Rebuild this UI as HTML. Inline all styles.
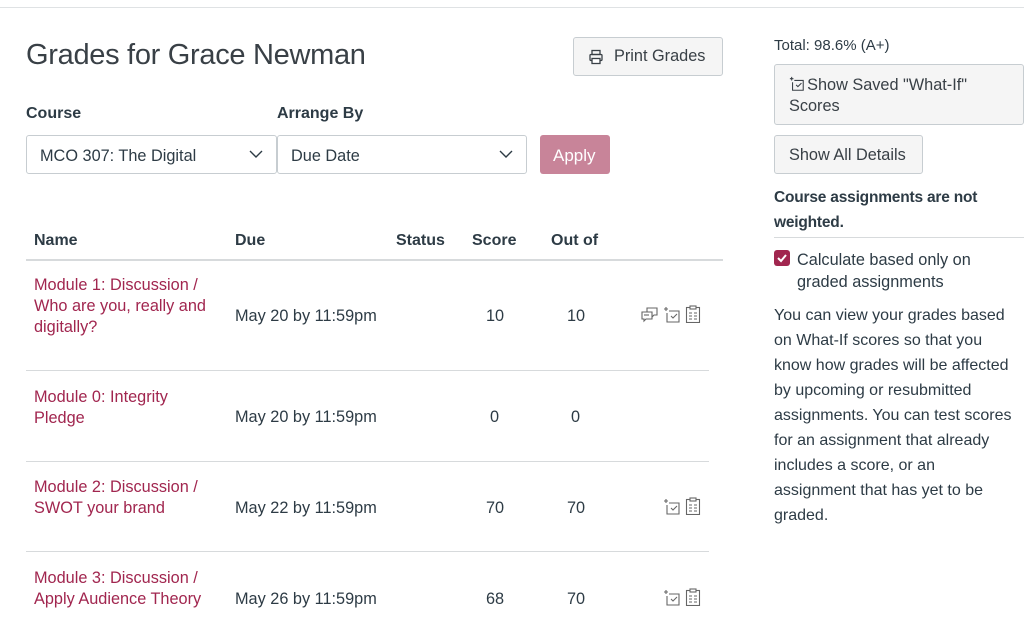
<!DOCTYPE html>
<html><head><meta charset="utf-8"><style>
body{margin:0;width:1024px;height:627px;background:#fff;font-family:"Liberation Sans",Arial,sans-serif;color:#2d3b45;position:relative;overflow:hidden}
.a{position:absolute;white-space:nowrap}
.l{color:#a1264f;font-size:16.3px;line-height:21px}
.t{font-size:16.3px}
.h{font-weight:bold;font-size:16px}
.hr{position:absolute;height:1px;background:#d7dadc}
.btn{position:absolute;background:#f5f5f5;border:1px solid #c7cdd1;border-radius:3px;box-sizing:border-box}
.sel{position:absolute;border:1px solid #c7cdd1;border-radius:3px;box-sizing:border-box;background:#fff}
svg{position:absolute}
</style></head><body>
<div class="hr" style="left:0;top:7px;width:1024px;background:#dfe2e4"></div>
<div class="a" style="left:26px;top:39px;font-size:29px;letter-spacing:-0.3px;color:#394046">Grades for Grace Newman</div>
<div class="btn" style="left:573px;top:37px;width:150px;height:39px"></div>
<svg style="left:588px;top:49px" width="16" height="16" viewBox="0 0 16 16" fill="none" stroke="#394046" stroke-width="1.3"><rect x="4" y="1.5" width="8" height="4"/><rect x="2" y="5.5" width="12" height="6" rx="1"/><rect x="4" y="9.5" width="8" height="5" fill="#fff"/></svg>
<div class="a t" style="left:614px;top:47px;color:#394046">Print Grades</div>
<div class="a h" style="left:26px;top:105px">Course</div>
<div class="a h" style="left:277px;top:105px">Arrange By</div>
<div class="sel" style="left:26px;top:135px;width:251px;height:39px"></div>
<div class="a t" style="left:40px;top:147px">MCO 307: The Digital</div>
<svg style="left:248px;top:148px" width="16" height="12" viewBox="0 0 16 12" fill="none" stroke="#2d3b45" stroke-width="1.4"><path d="M2 3l6 6 6-6"/></svg>
<div class="sel" style="left:277px;top:135px;width:250px;height:39px"></div>
<div class="a t" style="left:291px;top:147px">Due Date</div>
<svg style="left:498px;top:148px" width="16" height="12" viewBox="0 0 16 12" fill="none" stroke="#2d3b45" stroke-width="1.4"><path d="M2 3l6 6 6-6"/></svg>
<div class="a" style="left:540px;top:135px;width:70px;height:39px;background:#c88499;border-radius:3px"></div>
<div class="a t" style="left:553px;top:146px;color:#fff;font-size:17px">Apply</div>
<div class="a h" style="left:34px;top:232px">Name</div>
<div class="a h" style="left:235px;top:232px">Due</div>
<div class="a h" style="left:396px;top:232px">Status</div>
<div class="a h" style="left:472px;top:232px">Score</div>
<div class="a h" style="left:551px;top:232px">Out of</div>
<div class="hr" style="left:26px;top:259px;width:697px;height:2px"></div>

<div class="a l" style="left:34px;top:275px">Module 1: Discussion /<br>Who are you, really and<br>digitally?</div>
<div class="a t" style="left:235px;top:307px">May 20 by 11:59pm</div>
<div class="a t" style="left:486px;top:307px">10</div>
<div class="a t" style="left:567px;top:307px">10</div>
<div class="hr" style="left:26px;top:370px;width:683px"></div>

<div class="a l" style="left:34px;top:387px">Module 0: Integrity<br>Pledge</div>
<div class="a t" style="left:235px;top:408px">May 20 by 11:59pm</div>
<div class="a t" style="left:490px;top:408px">0</div>
<div class="a t" style="left:571px;top:408px">0</div>
<div class="hr" style="left:26px;top:461px;width:683px"></div>

<div class="a l" style="left:34px;top:477px">Module 2: Discussion /<br>SWOT your brand</div>
<div class="a t" style="left:235px;top:499px">May 22 by 11:59pm</div>
<div class="a t" style="left:486px;top:499px">70</div>
<div class="a t" style="left:567px;top:499px">70</div>
<div class="hr" style="left:26px;top:551px;width:683px"></div>

<div class="a l" style="left:34px;top:568px">Module 3: Discussion /<br>Apply Audience Theory</div>
<div class="a t" style="left:235px;top:590px">May 26 by 11:59pm</div>
<div class="a t" style="left:486px;top:590px">68</div>
<div class="a t" style="left:567px;top:590px">70</div>

<svg style="left:641px;top:306px" width="18" height="18" viewBox="0 0 18 18" fill="none" stroke="#666" stroke-width="1.1"><path d="M6 2h10v7h-3l-2 2v-2H6z"/><path d="M1 6h10v7H5l-2 2v-2H1z" fill="#fff"/><path d="M3 9h5"/></svg>
<svg style="left:663px;top:306px" width="18" height="18" viewBox="0 0 18 18" fill="none" stroke="#666" stroke-width="1.1"><path d="M1 3h4M3 1v4"/><path d="M6 5h10v11H4V7"/><path d="M8 10l2 2 4-4"/></svg>
<svg style="left:685px;top:305px" width="16" height="18" viewBox="0 0 16 18" fill="none" stroke="#666" stroke-width="1.1"><rect x="1.5" y="2.5" width="13" height="15"/><rect x="5" y="1" width="6" height="3" fill="#fff"/><path d="M4 8h3M9 8h3M4 11h3M9 11h3M4 14h3M9 14h3"/></svg>
<svg style="left:663px;top:498px" width="18" height="18" viewBox="0 0 18 18" fill="none" stroke="#666" stroke-width="1.1"><path d="M1 3h4M3 1v4"/><path d="M6 5h10v11H4V7"/><path d="M8 10l2 2 4-4"/></svg>
<svg style="left:685px;top:497px" width="16" height="18" viewBox="0 0 16 18" fill="none" stroke="#666" stroke-width="1.1"><rect x="1.5" y="2.5" width="13" height="15"/><rect x="5" y="1" width="6" height="3" fill="#fff"/><path d="M4 8h3M9 8h3M4 11h3M9 11h3M4 14h3M9 14h3"/></svg>
<svg style="left:663px;top:589px" width="18" height="18" viewBox="0 0 18 18" fill="none" stroke="#666" stroke-width="1.1"><path d="M1 3h4M3 1v4"/><path d="M6 5h10v11H4V7"/><path d="M8 10l2 2 4-4"/></svg>
<svg style="left:685px;top:588px" width="16" height="18" viewBox="0 0 16 18" fill="none" stroke="#666" stroke-width="1.1"><rect x="1.5" y="2.5" width="13" height="15"/><rect x="5" y="1" width="6" height="3" fill="#fff"/><path d="M4 8h3M9 8h3M4 11h3M9 11h3M4 14h3M9 14h3"/></svg>

<div class="a" style="left:774px;top:37px;font-size:15px">Total: 98.6% (A+)</div>
<div class="btn" style="left:774px;top:64px;width:250px;height:61px"></div>
<svg style="left:789px;top:76px" width="16" height="16" viewBox="0 0 18 18" fill="none" stroke="#394046" stroke-width="1.2"><path d="M1 3h4M3 1v4"/><path d="M6 5h10v11H4V7"/><path d="M8 10l2 2 4-4"/></svg>
<div class="a t" style="left:789px;top:75px;line-height:21px;color:#394046">&nbsp;&nbsp;&nbsp;&nbsp;Show Saved "What-If"<br>Scores</div>
<div class="btn" style="left:774px;top:135px;width:149px;height:39px"></div>
<div class="a t" style="left:789px;top:146px;color:#394046">Show All Details</div>
<div class="a h" style="left:774px;top:185px;line-height:25px;font-size:15.5px;letter-spacing:-0.2px">Course assignments are not<br>weighted.</div>
<div class="hr" style="left:774px;top:237px;width:250px"></div>
<div class="a" style="left:774px;top:250px;width:16px;height:16px;background:#a1264f;border-radius:3px"></div>
<svg style="left:776px;top:252px" width="12" height="12" viewBox="0 0 12 12" fill="none" stroke="#fff" stroke-width="2"><path d="M2 6l3 3 5-6"/></svg>
<div class="a t" style="left:797px;top:249px;line-height:22px">Calculate based only on<br>graded assignments</div>
<div class="a t" style="left:774px;top:303px;line-height:25px;font-size:16px">You can view your grades based<br>on What-If scores so that you<br>know how grades will be affected<br>by upcoming or resubmitted<br>assignments. You can test scores<br>for an assignment that already<br>includes a score, or an<br>assignment that has yet to be<br>graded.</div>
</body></html>
